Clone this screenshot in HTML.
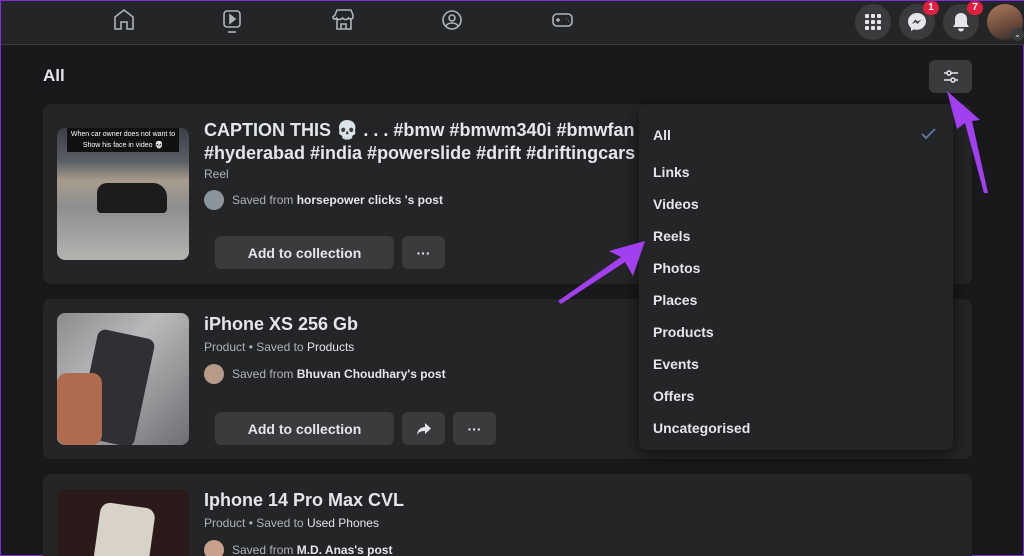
<!DOCTYPE html>
<html style="width:1024px;height:556px;overflow:hidden"><head><meta charset="utf-8"><style>
*{margin:0;padding:0;box-sizing:border-box}
body{width:1024px;height:556px;overflow:hidden;background:#18191a;font-family:"Liberation Sans",sans-serif;color:#e4e6eb;position:relative;border:1px solid #7b2fd6}
.abs{position:absolute}
.hdr{left:0;top:0;width:1024px;height:44px;background:#242526;border-bottom:1px solid #3a3b3c}
.circ{width:36px;height:36px;border-radius:50%;background:#3a3b3c;top:3px}
.badge{background:#e41e3f;color:#fff;font-size:10px;font-weight:bold;border-radius:8px;width:16px;height:14px;text-align:center;line-height:14px}
.card{left:42px;width:929px;background:#242526;border-radius:8px}
.thumb{left:56px;width:132px;height:132px;border-radius:8px;overflow:hidden}
.title{left:203px;font-size:18px;font-weight:bold;color:#e4e6eb;white-space:nowrap;line-height:23px}
.sub{left:203px;font-size:12px;color:#b0b3b8}
.sub b{font-weight:normal;color:#e4e6eb}
.saved{left:203px;font-size:12px;color:#b0b3b8;display:flex;align-items:center;gap:8px}
.saved b{color:#e4e6eb}
.av{width:20px;height:20px;border-radius:50%}
.btn{height:33px;background:#3a3b3c;border-radius:6px;color:#e4e6eb;font-size:14px;font-weight:bold;display:flex;align-items:center;justify-content:center}
.menu{left:638px;top:103px;width:314px;height:346px;background:#242526;border-radius:8px;box-shadow:0 4px 16px rgba(0,0,0,.6)}
.mi{position:absolute;left:14px;font-size:14px;font-weight:bold;color:#e4e6eb}
</style></head><body>
<div class="abs hdr"></div>
<svg class="abs" style="left:0;top:0" width="1024" height="44" fill="none" stroke="#b0b3b8" stroke-width="1.6">
<path d="M114 28V16l9-7 9 7v12h-6v-7h-6v7z"/>
<rect x="223" y="10" width="16" height="16" rx="3"/><path d="M229 14l5 4-5 4z" fill="#b0b3b8"/><path d="M227 31h8"/>
<path d="M334 14l2-5h14l2 5v2c0 2-3 3-4.5 1-1.5 2-4.5 2-6 0-1.5 2-4.5 2-6 0-1.5 2-3.5 1-3.5-1zM336 17v11h14V17M340 28v-5h5v5"/>
<circle cx="451" cy="19" r="9"/><circle cx="451" cy="17" r="3"/><path d="M445 25c2-4 10-4 12 0"/>
<rect x="552" y="13" width="19" height="12" rx="4"/><path d="M557 17v4M555 19h4M565 18h.5M567 20h.5"/>
</svg>
<div class="abs circ" style="left:854px"></div>
<svg class="abs" style="left:864px;top:13px" width="16" height="16" fill="#e4e6eb"><g><rect x="0" y="0" width="4" height="4" rx="1"/><rect x="6" y="0" width="4" height="4" rx="1"/><rect x="12" y="0" width="4" height="4" rx="1"/><rect x="0" y="6" width="4" height="4" rx="1"/><rect x="6" y="6" width="4" height="4" rx="1"/><rect x="12" y="6" width="4" height="4" rx="1"/><rect x="0" y="12" width="4" height="4" rx="1"/><rect x="6" y="12" width="4" height="4" rx="1"/><rect x="12" y="12" width="4" height="4" rx="1"/></g></svg>
<div class="abs circ" style="left:898px"></div>
<svg class="abs" style="left:906px;top:11px" width="20" height="20"><path d="M10 1C5 1 1 4.7 1 9.5c0 2.6 1.2 4.8 3 6.3V19l3-1.6c.9.3 1.9.4 3 .4 5 0 9-3.7 9-8.5S15 1 10 1z" fill="#e4e6eb"/><path d="M4.5 12l4-4.5 2 2 4-2-4 4.5-2-2z" fill="#3a3b3c"/></svg>
<div class="abs badge" style="left:922px;top:0px">1</div>
<div class="abs circ" style="left:942px"></div>
<svg class="abs" style="left:951px;top:11px" width="18" height="20" fill="#e4e6eb"><path d="M9 1c-3.5 0-6 2.7-6 6v5l-2 3h16l-2-3V7c0-3.3-2.5-6-6-6zM6 16.5a3 3 0 006 0z"/></svg>
<div class="abs badge" style="left:966px;top:0px">7</div>
<div class="abs" style="left:986px;top:3px;width:36px;height:36px;border-radius:50%;background:linear-gradient(160deg,#b07a5a,#6a4a3c 60%,#2a2a2a)"></div>
<div class="abs" style="left:1010px;top:27px;width:13px;height:13px;border-radius:50%;background:#3a3b3c;font-size:8px;text-align:center;line-height:13px;color:#e4e6eb">⌄</div>

<div class="abs" style="left:42px;top:65px;font-size:17px;font-weight:bold">All</div>
<div class="abs" style="left:928px;top:59px;width:43px;height:33px;border-radius:6px;background:#3a3b3c"></div>
<svg class="abs" style="left:940px;top:67px" width="20" height="18" stroke="#e4e6eb" stroke-width="1.5" fill="none"><path d="M3 5h14M3 12h14"/><circle cx="8" cy="5" r="2" fill="#3a3b3c"/><circle cx="12" cy="12" r="2" fill="#3a3b3c"/></svg>

<div class="abs card" style="top:103px;height:180px"></div>
<div class="abs thumb" style="top:127px;background:linear-gradient(180deg,#3c3f44 0%,#5a5f66 25%,#a89c8c 40%,#8e8e90 60%,#b5b3b0 100%)">
<div style="position:absolute;left:40px;top:55px;width:70px;height:30px;background:#1c1c1e;border-radius:10px 14px 4px 4px"></div>
<div style="position:absolute;left:10px;top:0;width:112px;height:24px;background:#111;color:#fff;font-size:7px;text-align:center;line-height:11px;padding-top:1px">When car owner does not want to<br>Show his face in video 💀</div></div>
<div class="abs title" style="top:118px">CAPTION THIS 💀 . . . #bmw #bmwm340i #bmwfan</div>
<div class="abs title" style="top:141px">#hyderabad #india #powerslide #drift #driftingcars</div>
<div class="abs sub" style="top:166px">Reel</div>
<div class="abs saved" style="top:189px"><div class="av" style="background:#8a949c"></div><span>Saved from <b>horsepower clicks 's post</b></span></div>
<div class="abs btn" style="left:214px;top:235px;width:179px">Add to collection</div>
<div class="abs btn" style="left:401px;top:235px;width:43px">···</div>

<div class="abs card" style="top:298px;height:160px"></div>
<div class="abs thumb" style="top:312px;background:linear-gradient(135deg,#8a8c8e,#b7b9ba 40%,#6d6f72)">
<div style="position:absolute;left:30px;top:20px;width:58px;height:110px;background:#2f3033;border-radius:8px;transform:rotate(12deg)"></div>
<div style="position:absolute;left:0;top:60px;width:45px;height:72px;background:#b06a4e;border-radius:10px"></div></div>
<div class="abs title" style="top:312px">iPhone XS 256 Gb</div>
<div class="abs sub" style="top:339px">Product • Saved to <b>Products</b></div>
<div class="abs saved" style="top:363px"><div class="av" style="background:#b89a88"></div><span>Saved from <b>Bhuvan Choudhary's post</b></span></div>
<div class="abs btn" style="left:214px;top:411px;width:179px">Add to collection</div>
<div class="abs btn" style="left:401px;top:411px;width:43px"><svg width="16" height="14"><path d="M9 1l6 5.5L9 12V9C5 9 2.5 10 1 13c.5-5 3-7.5 8-8z" fill="#e4e6eb"/></svg></div>
<div class="abs btn" style="left:452px;top:411px;width:43px">···</div>

<div class="abs" style="left:0;top:473px;width:1024px;height:82px;overflow:hidden">
<div class="abs card" style="top:0;height:82px;border-radius:8px 8px 0 0"></div>
<div class="abs thumb" style="top:15px;height:67px;border-radius:8px 8px 0 0;background:#2a1a1a">
<div style="position:absolute;left:38px;top:16px;width:55px;height:90px;background:#d8d2c8;border-radius:10px;transform:rotate(8deg)"></div></div>
<div class="abs title" style="top:15px">Iphone 14 Pro Max CVL</div>
<div class="abs sub" style="top:42px">Product • Saved to <b>Used Phones</b></div>
<div class="abs saved" style="top:66px"><div class="av" style="background:#c9a089"></div><span>Saved from <b>M.D. Anas's post</b></span></div>
</div>

<div class="abs menu">
<div class="mi" style="top:23px">All</div>
<svg style="position:absolute;left:282px;top:24px" width="16" height="12"><path d="M1 6l4 4 9-9" stroke="#5b7cab" stroke-width="1.8" fill="none"/></svg>
<div class="mi" style="top:60px">Links</div>
<div class="mi" style="top:92px">Videos</div>
<div class="mi" style="top:124px">Reels</div>
<div class="mi" style="top:156px">Photos</div>
<div class="mi" style="top:188px">Places</div>
<div class="mi" style="top:220px">Products</div>
<div class="mi" style="top:252px">Events</div>
<div class="mi" style="top:284px">Offers</div>
<div class="mi" style="top:316px">Uncategorised</div>
</div>

<svg class="abs" style="left:0;top:0" width="1024" height="556">
<path d="M946 90L979 119 971 120 987 192 983 192 964 122 956 128z" fill="#a23ff0"/>
<path d="M644 240L632 275 624 261 560 303 557 300 620 256 608 250z" fill="#a23ff0"/>
</svg>
</body></html>
